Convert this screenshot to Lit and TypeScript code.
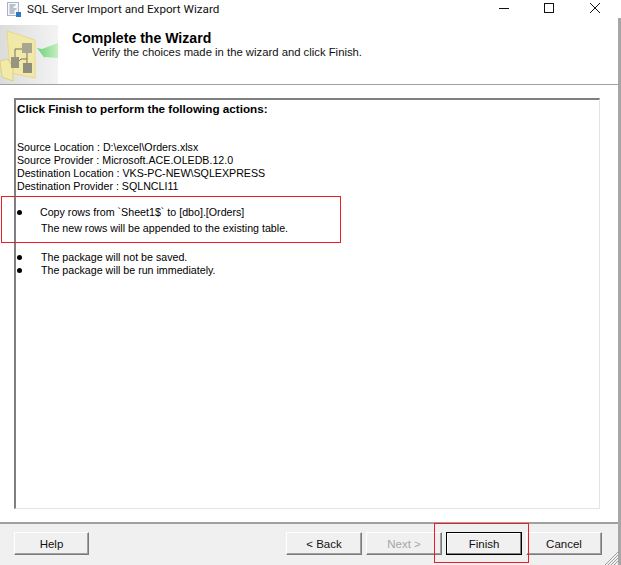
import { LitElement, html, css } from "lit";
import { customElement } from "lit/decorators.js";

@customElement("app-root")
export class AppRoot extends LitElement {
  static styles = css`
    :host { display: block; width: 621px; height: 565px; background: #fff; overflow: hidden; font-family: "Liberation Sans", Arial, sans-serif; color: #000; }
    .win { position: relative; width: 621px; height: 565px; display: flex; flex-direction: column; box-sizing: border-box; padding-right: 3px; }
    .edge { position: absolute; right: 0; top: 18px; bottom: 0; width: 3px; background: #a6a6a6; }
    .title { height: 18px; margin-right: -3px; display: flex; align-items: center; padding-left: 7px; gap: 6px; font-family: Roboto, sans-serif; font-size: 11.7px; color: #111; position: relative; }
    .caps { position: absolute; left: 499px; top: 2px; display: block; }
    .head { height: 66px; display: flex; border-bottom: 1px solid #a0a0a0; box-sizing: content-box; }
    .banner { width: 58px; height: 59px; margin-top: 7px; flex: none; display: block; }
    .htext { padding: 13px 0 0 14px; }
    .h1 { font-size: 14.1px; font-weight: bold; line-height: 15px; }
    .h2 { font-size: 11.3px; line-height: 13px; padding-left: 20px; color: #111; }
    .main { flex: 1; padding: 13px 18px 13px 14px; display: flex; }
    .box { flex: 1; border: 2px solid #7f7f7f; border-right: 1px solid #e4e4e4; border-bottom: 1px solid #e4e4e4; padding: 1px 0 0 1px; font-size: 10.66px; line-height: 13px; color: #000; }
    .bold { font-weight: bold; font-size: 11.7px; line-height: 15px; margin-bottom: 25px; }
    .gap { height: 14px; }
    .gap.short { height: 13px; }
    .li { display: flex; align-items: flex-start; }
    .dot { width: 24px; flex: none; }
    .dot::before { content: ""; display: block; width: 5px; height: 5px; margin-top: 4px; border-radius: 50%; background: #000; }
    .li.tall { height: 16px; }
    .shift { margin-left: -1px; }
    .sub { padding-left: 24px; height: 15px; }
    .foot { height: 41px; background: #f0f0f0; border-top: 2px solid #a0a0a0; display: flex; box-sizing: content-box; align-items: flex-start; }
    .btns { display: flex; gap: 4px; padding: 8px 0 0 14px; }
    .btn { width: 76px; height: 23px; box-sizing: border-box; background: #f0f0f0; border: 1px solid; border-color: #fff #7a7a7a #7a7a7a #fff; box-shadow: inset -1px -1px 0 #a0a0a0; display: flex; align-items: center; justify-content: center; font-size: 11.5px; color: #111; }
    .help { width: 75px; margin-right: 193px; }
    .next { color: #a6a6a6; }
    .finish { border: 1px solid #000; box-shadow: inset -1px -1px 0 #808080, inset 1px 1px 0 #fff; }
    .red { position: absolute; border: 1px solid #ed1c24; box-sizing: border-box; pointer-events: none; }
    .r1 { left: 1px; top: 196px; width: 340px; height: 47px; }
    .r2 { left: 434px; top: 523px; width: 95px; height: 40px; }
    .grip { position: absolute; right: 3px; bottom: 0; }
  `;

  render() {
    return html`<div class="win">
      <div class="edge"></div>
      <div class="title">
        <svg width="14" height="15" viewBox="0 0 14 15">
          <rect x="0.5" y="0.5" width="11" height="13" fill="#f4f7fb" stroke="#a9b4c6"/>
          <path d="M2.5 3h6M2.5 5h4M2.5 7h7M2.5 9h5M2.5 11h5" stroke="#7f8a9c" fill="none"/>
          <rect x="9" y="10" width="5" height="5" fill="#2f78c4"/>
        </svg>
        <span>SQL Server Import and Export Wizard</span>
        <svg class="caps" width="110" height="14" viewBox="0 0 110 14" fill="none" stroke="#111">
          <path d="M0 6.5h10"/>
          <rect x="45.5" y="1.5" width="9" height="9"/>
          <path d="M91 1l10 10M101 1l-10 10"/>
        </svg>
      </div>
      <div class="head">
        <svg class="banner" viewBox="0 0 58 59">
          <defs>
            <linearGradient id="bg" x1="0" x2="1" y1="0" y2="0"><stop offset="0" stop-color="#dcdcdc"/><stop offset="1" stop-color="#f3f3f3"/></linearGradient>
            <linearGradient id="ar" x1="0" x2="1" y1="0" y2="0"><stop offset="0" stop-color="#6fd27a"/><stop offset="1" stop-color="#c4efc0"/></linearGradient>
          </defs>
          <rect width="58" height="59" fill="url(#bg)"/>
          <path d="M37 23l5 1 16-6v15l-14-1 2 3z" fill="url(#ar)"/>
          <path d="M7 6l28 9v38l-25-5z" fill="#f2e9a9" stroke="#e6d98d"/>
          <path d="M0 36l8-2 5 9 0 13-11-4z" fill="#f3eaa8" stroke="#dccf84"/>
          <path d="M15 33v-9h8M27 28v10M18 37l3-3h6" stroke="#77755a" fill="none"/>
          <rect x="22" y="18" width="10" height="10" fill="#a8a690"/>
          <rect x="11" y="32" width="8" height="11" fill="#96957f"/>
          <rect x="23" y="38" width="9" height="10" fill="#8f8e7a"/>
        </svg>
        <div class="htext">
          <div class="h1">Complete the Wizard</div>
          <div class="h2">Verify the choices made in the wizard and click Finish.</div>
        </div>
      </div>
      <div class="main">
        <div class="box">
          <div class="bold">Click Finish to perform the following actions:</div>
          <div>Source Location : D:\\excel\\Orders.xlsx</div>
          <div>Source Provider : Microsoft.ACE.OLEDB.12.0</div>
          <div>Destination Location : VKS-PC-NEW\\SQLEXPRESS</div>
          <div>Destination Provider : SQLNCLI11</div>
          <div class="gap short"></div>
          <div class="li tall"><span class="dot"></span><span class="shift">Copy rows from \`Sheet1$\` to [dbo].[Orders]</span></div>
          <div class="sub">The new rows will be appended to the existing table.</div>
          <div class="gap"></div>
          <div class="li"><span class="dot"></span><span>The package will not be saved.</span></div>
          <div class="li"><span class="dot"></span><span>The package will be run immediately.</span></div>
        </div>
      </div>
      <div class="foot">
        <div class="btns">
          <div class="btn help">Help</div>
          <div class="btn">&lt; Back</div>
          <div class="btn next">Next &gt;</div>
          <div class="btn finish">Finish</div>
          <div class="btn">Cancel</div>
        </div>
      </div>
      <div class="red r1"></div>
      <div class="red r2"></div>
      <svg class="grip" width="13" height="14" viewBox="0 0 13 14" fill="none" stroke="#a0a0a0">
        <path d="M13 1L0 14M13 4L3 14M13 7L6 14M13 10L9 14"/>
      </svg>
    </div>`;
  }
}
